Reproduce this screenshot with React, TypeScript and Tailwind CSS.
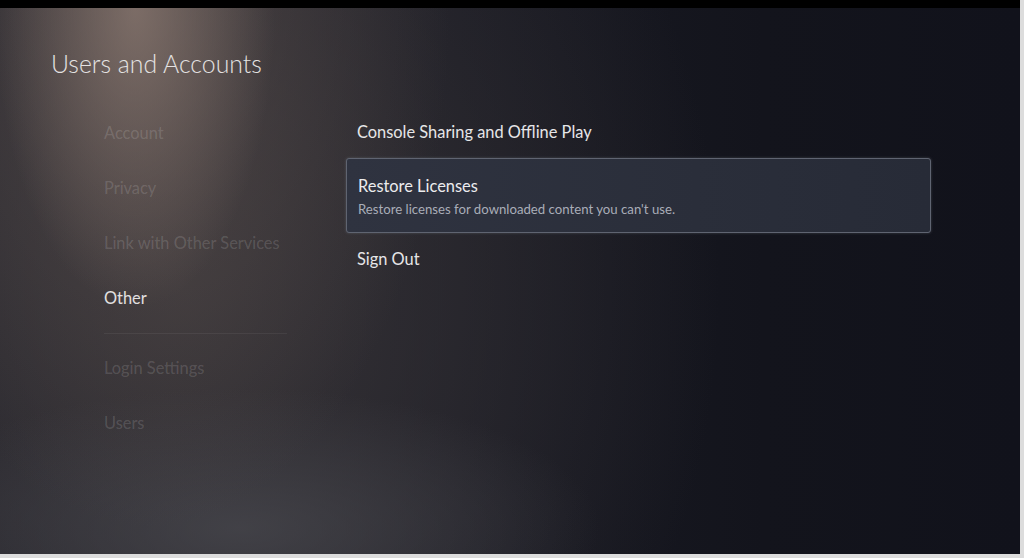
import React from "react";

const leftItems = [
  { label: "Account", active: false },
  { label: "Privacy", active: false },
  { label: "Link with Other Services", active: false },
  { label: "Other", active: true },
];
const leftItems2 = ["Login Settings", "Users"];

export default function App() {
  return (
    <div className="w-[1024px] h-[558px] bg-[#dcdcdc] flex overflow-hidden [font-family:Lato,'Noto_Sans',sans-serif]">
      <div className="w-[1020px] h-[554px] bg-black flex flex-col">
        <div className="h-[8px] shrink-0" />
        <div className="flex-1 flex flex-col bg-[#13141c] [background-image:radial-gradient(ellipse_140px_300px_at_135px_0px,rgba(145,126,117,0.7),transparent),radial-gradient(ellipse_300px_520px_at_150px_0px,rgba(100,88,84,0.55),transparent),radial-gradient(ellipse_360px_140px_at_240px_520px,rgba(74,74,80,0.7),transparent),radial-gradient(ellipse_540px_660px_at_180px_280px,rgba(58,54,57,0.95),transparent),linear-gradient(to_right,#1f2029,#191a23_45%,#13141c_75%,#11121b)]">
          <div className="pl-[51px] pt-[40px] h-[98px] shrink-0">
            <div className="text-[24.8px] leading-[32px] text-[#e4e2e2] font-light">
              Users and Accounts
            </div>
          </div>
          <div className="flex">
            <div className="ml-[104px] w-[183px] flex flex-col">
              {leftItems.map((it) => (
                <div
                  key={it.label}
                  className={`h-[55px] flex items-center text-[16.4px] whitespace-nowrap ${
                    it.active ? "text-[#e2e0e0]" : "text-white/15"
                  }`}
                >
                  {it.label}
                </div>
              ))}
              <div className="py-[7px]">
                <div className="h-px bg-white/[0.06]" />
              </div>
              {leftItems2.map((l) => (
                <div key={l} className="h-[55px] flex items-center text-[16.4px] text-white/15 whitespace-nowrap">
                  {l}
                </div>
              ))}
            </div>
            <div className="ml-[59px] w-[585px] flex flex-col">
              <div className="h-[52px] flex items-center pl-[11px] text-[16.4px] text-[#e6e6e8]">
                Console Sharing and Offline Play
              </div>
              <div className="h-[75px] rounded-[3px] border border-[#5f6471] bg-[#2a2e3a] [background-image:linear-gradient(to_right,#2f3340,#2a2e3a_60%,#272b37)] shadow-[0_0_3px_rgba(140,145,160,0.35)] pl-[11px] pt-[17px] flex flex-col">
                <div className="text-[16.4px] leading-[20px] text-[#ececee]">Restore Licenses</div>
                <div className="mt-[5px] text-[13.2px] leading-[16px] text-[#a9adb8]">
                  Restore licenses for downloaded content you can't use.
                </div>
              </div>
              <div className="h-[52px] flex items-center pl-[11px] text-[16.4px] text-[#e6e6e8]">
                Sign Out
              </div>
            </div>
          </div>
        </div>
      </div>
    </div>
  );
}
